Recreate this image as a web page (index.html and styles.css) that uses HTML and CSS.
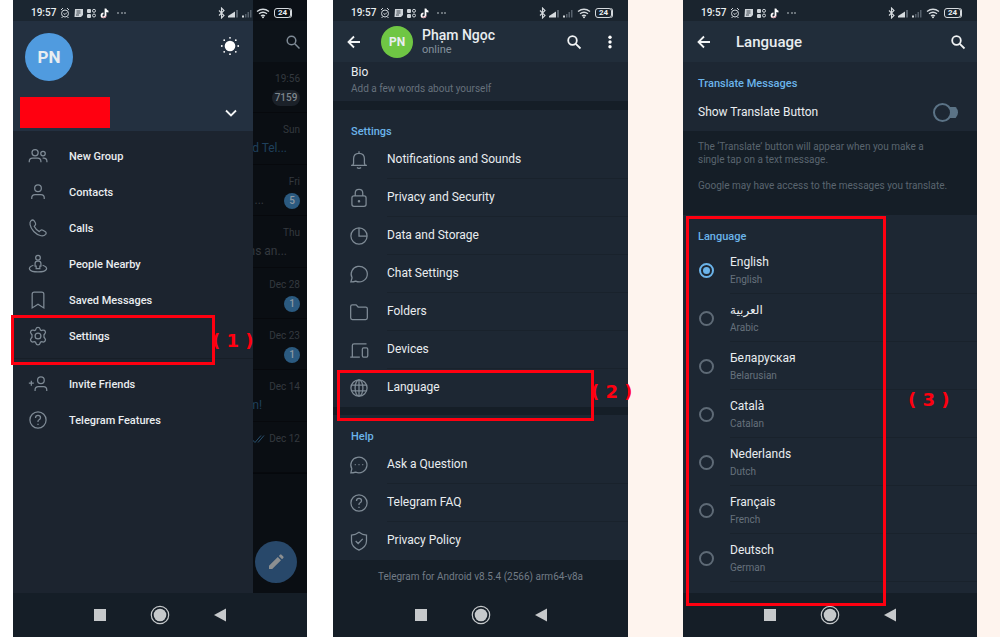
FILE: index.html
```html
<!DOCTYPE html>
<html lang="en">
<head>
  <meta charset="UTF-8" />
  <meta name="viewport" content="width=device-width, initial-scale=1.0"/>
  <title>Telegram - Change language</title>
  <link rel="stylesheet" href="styles.css">
</head>
<body>
  <svg class="sprite" aria-hidden="true">
    <!-- status bar -->
    <symbol id="st-left" viewBox="0 0 66 12">
      <g fill="none" stroke="#cfd5da" stroke-width="1">
        <circle cx="5" cy="6.500" r="3.500"/>
        <path d="M1 3l2-2M9 3L7 1M3.500 6.500l1.500 1 2-2M2.500 10l-1 1M7.500 10l1 1"/>
      </g>
      <path fill="#cfd5da" d="M15 2h8v6l-2 2h-6.500z"/>
      <path d="M16.500 4h4M16.500 6h4M16 8h3" stroke="#1c2631" stroke-width=".8"/>
      <g fill="#cfd5da">
        <rect x="27" y="2" width="4" height="4" rx="1"/>
        <rect x="27" y="7" width="4" height="4" rx="1"/>
      </g>
      <g fill="none" stroke="#cfd5da">
        <circle cx="34" cy="3.800" r="1.500"/>
        <circle cx="34" cy="8.500" r="1.500"/>
      </g>
      <path d="M45.500 1.500v6.800a2 2 0 1 1-2-2M45.500 2c.4 1.800 1.600 2.500 3 2.600" fill="none" stroke="#fff" stroke-width="1.800"/>
      <path d="M42 9.800c1.500 1.400 4.200.8 4.400-1.300" fill="none" stroke="#c4566c" stroke-width=".7"/>
      <g fill="#cfd5da">
        <circle cx="58" cy="6" r=".8"/><circle cx="62" cy="6" r=".8"/><circle cx="65" cy="6" r=".8"/>
      </g>
    </symbol>
    <symbol id="st-right" viewBox="0 0 54 12">
      <path d="M1 3.500l5 5L3.500 11V1L6 3.500l-5 5" fill="none" stroke="#d5dade" stroke-width="1.100"/>
      <g fill="#d5dade">
        <path d="M10 10.500v-1.500l7-4.500v6z"/>
        <rect x="24" y="8.500" width="2" height="2"/>
      </g>
      <g fill="#56616c">
        <rect x="18" y="3" width="2" height="7.500"/>
        <rect x="27" y="7" width="1.500" height="3.500"/><rect x="29.500" y="5" width="1.500" height="5.500"/><rect x="32" y="3" width="1.500" height="7.500"/>
      </g>
      <path d="M39 4.500q6-4.500 12 0M41 6.800q4-3 8 0M43 9q2-1.500 4 0" fill="none" stroke="#d5dade" stroke-width="1.400"/>
      <circle cx="45" cy="10.300" r="1" fill="#d5dade"/>
    </symbol>
    <symbol id="sun" viewBox="0 0 20 20">
      <circle cx="10" cy="10" r="5.300" fill="#fff"/>
      <g fill="#fff">
        <circle cx="10" cy="1.800" r=".9"/><circle cx="10" cy="18.200" r=".9"/><circle cx="1.800" cy="10" r=".9"/><circle cx="18.200" cy="10" r=".9"/>
        <circle cx="4.200" cy="4.200" r=".9"/><circle cx="15.800" cy="4.200" r=".9"/><circle cx="4.200" cy="15.800" r=".9"/><circle cx="15.800" cy="15.800" r=".9"/>
      </g>
    </symbol>
    <symbol id="chevron" viewBox="0 0 12 12"><path d="M1 3.500l5 5 5-5"/></symbol>
    <symbol id="search" viewBox="0 0 16 16"><circle cx="6.500" cy="6.500" r="4.300"/><path d="M9.800 9.800l4.700 4.700"/></symbol>
    <symbol id="back" viewBox="0 0 14 14"><path d="M13 7H2M7 1.500L1.500 7 7 12.500"/></symbol>
    <symbol id="more" viewBox="0 0 14 14">
      <circle cx="7" cy="2.200" r="1.700"/><circle cx="7" cy="7" r="1.700"/><circle cx="7" cy="11.800" r="1.700"/>
    </symbol>
    <symbol id="pencil" viewBox="0 0 18 18">
      <path d="M2 16v-3.200L10.800 4 14 7.200 5.200 16zM11.800 3l1.300-1.300q.7-.7 1.400 0l1.800 1.800q.7.700 0 1.400L15 6.200z"/>
    </symbol>
    <symbol id="ticks" viewBox="0 0 14 10"><path d="M1 5.500l3 3L10 1.500M7 8.500l6-7"/></symbol>

    <!-- drawer -->
    <symbol id="group" viewBox="0 0 24 24">
      <circle cx="8.500" cy="8" r="3.700"/><path d="M1.500 19.500v-1q0-4 4-4h6q4 0 4 4v1"/>
      <circle cx="18" cy="9" r="2.700"/><path d="M17.500 14.500h1.500q3.700 0 3.700 4v1"/>
    </symbol>
    <symbol id="person" viewBox="0 0 24 24">
      <circle cx="12" cy="7.500" r="4"/><path d="M4.500 20.500v-1.500q0-4 4-4h7q4 0 4 4v1.500"/>
    </symbol>
    <symbol id="phone" viewBox="0 0 24 24">
      <path d="M3.500 3.500q2-2 3.700-.3l1.600 2.500q1 1.700-.3 3.100L7.400 10q1.800 4 6.200 6.300l1.200-1.200q1.400-1.300 3.100-.3l3 1.800q1.600 1.200.2 3-2 2.400-5.500 1.700C9 20 3.500 13.500 2.500 8q-.5-3 1-4.500z"/>
    </symbol>
    <symbol id="nearby" viewBox="0 0 24 24">
      <circle cx="12" cy="4.500" r="2.800"/>
      <path d="M9.800 17.500v-3H8.500v-3q0-3 3-3h1q3 0 3 3v3h-1.300v3zM6.500 13.500C-1.500 16 .5 21.500 12 21.500s13.500-5.500 5.500-8"/>
    </symbol>
    <symbol id="bookmark" viewBox="0 0 24 24"><path d="M5 21.500V5q0-2.500 2.500-2.500h9Q19 2.500 19 5v16.500L12 17z"/></symbol>
    <symbol id="gear" viewBox="0 0 24 24">
      <path d="M9.500 3.500q.5-2 2.500-2t2.500 2l.4 1.300 1.200.6 1.500-.4q2-.5 3 1.200t-.4 3.100l-1 1.200v3l1 1.200q1.400 1.500.4 3.200t-3 1.200l-1.500-.4-1.200.7-.4 1.300q-.5 2-2.500 2t-2.500-2l-.4-1.300-1.200-.7-1.500.4q-2 .5-3-1.200t.4-3.200l1-1.200v-3l-1-1.200Q2.400 7.900 3.400 6.200t3-1.200l1.500.4 1.200-.6z"/>
      <circle cx="12" cy="12" r="3.500"/>
    </symbol>
    <symbol id="invite" viewBox="0 0 24 24">
      <path d="M1 11h6M4 8v6"/><circle cx="15.500" cy="7.500" r="4"/><path d="M8.500 20.500v-1.500q0-4 4-4h6q4 0 4 4v1.500"/>
    </symbol>
    <symbol id="help" viewBox="0 0 24 24">
      <circle cx="12" cy="12" r="9.700"/><path d="M9 9.500q0-3 3-3t3 2.700q0 1.500-1.700 2.500T12 14v.5M12 16.500v1.500"/>
    </symbol>

    <!-- settings -->
    <symbol id="bell" viewBox="0 0 24 24">
      <path d="M2.500 18.500h19M4.500 18.500L5.500 16v-5.500q0-6.500 6.500-6.500t6.500 6.500V16l1 2.500M12 4V1.500M9.500 21q2.500 2 5 0"/>
    </symbol>
    <symbol id="lock" viewBox="0 0 24 24">
      <rect x="3.500" y="9.500" width="17" height="12.500" rx="2.500"/><path d="M7.500 9.500V6q0-4.500 4.500-4.500T16.500 6v3.500"/><circle cx="12" cy="15.800" r=".8"/>
    </symbol>
    <symbol id="pie" viewBox="0 0 24 24"><circle cx="12" cy="12" r="9.700"/><path d="M12 2.300V12h9.700"/></symbol>
    <symbol id="chat" viewBox="0 0 24 24"><path d="M2.200 21.500l1.500-5A9.700 9.300 0 1 1 8 20.500q-3 1.200-5.800 1z"/></symbol>
    <symbol id="folder" viewBox="0 0 24 24"><path d="M2 5.500Q2 3.500 4 3.500h4.500L11 6h9q2 0 2 2v11q0 2-2 2H4q-2 0-2-2z"/></symbol>
    <symbol id="devices" viewBox="0 0 24 24">
      <path d="M1.500 20.500H13M4 20.500V6.500q0-2 2-2h15"/><rect x="16" y="9.500" width="6.500" height="11" rx="1.500"/>
    </symbol>
    <symbol id="globe" viewBox="0 0 24 24">
      <circle cx="12" cy="12" r="9.700"/><ellipse cx="12" cy="12" rx="4.700" ry="9.700"/><path d="M12 2.300v19.400M3.500 8.500h17M3.500 15.500h17"/>
    </symbol>
    <symbol id="ask" viewBox="0 0 24 24">
      <path d="M2.200 21.500l1.200-5A9.700 9.300 0 1 1 8 20.500q-3 1-5.800 1zM7.500 11.500v.1M12 11.500v.1M16.500 11.500v.1" stroke-linecap="round"/>
    </symbol>
    <symbol id="shield" viewBox="0 0 24 24">
      <path d="M12 1.500Q16 4.500 21 5v7q0 7-9 11-9-4-9-11V5q5-.5 9-3.500zM8 12l3 3 5.500-5.500"/>
    </symbol>

    <!-- android navigation -->
    <symbol id="nav-recent" viewBox="0 0 20 20"><rect x="4" y="4" width="12" height="12" fill="#c6c9cb"/></symbol>
    <symbol id="nav-home" viewBox="0 0 20 20">
      <circle cx="10" cy="10" r="8.700" fill="none" stroke="#c6c9cb" stroke-width="1.200"/><circle cx="10" cy="10" r="6.300" fill="#c6c9cb"/>
    </symbol>
    <symbol id="nav-back" viewBox="0 0 20 20"><path d="M4 10l12-6.500v13z" fill="#c6c9cb"/></symbol>
  </svg>

  <main class="guide">
    <!-- Step 1: side menu -->
    <section class="phone phone-1">
      <div class="status status-dim">
        <span class="clock">19:57</span>
        <svg class="st-left"><use href="#st-left"/></svg>
        <svg class="st-right"><use href="#st-right"/></svg>
        <span class="battery">24</span>
      </div>
      <div class="home">
        <nav class="drawer">
          <header class="drawer-head">
            <div class="drawer-top">
              <span class="avatar avatar-blue">PN</span>
              <button class="icon-btn" aria-label="Night mode"><svg class="i20"><use href="#sun"/></svg></button>
            </div>
            <div class="drawer-user">
              <span class="name-cover"></span>
              <button class="icon-btn" aria-label="Accounts"><svg class="i12 line white"><use href="#chevron"/></svg></button>
            </div>
          </header>
          <div class="menu">
            <a href="#"><svg class="i20 line"><use href="#group"/></svg>New Group</a>
            <a href="#"><svg class="i20 line"><use href="#person"/></svg>Contacts</a>
            <a href="#"><svg class="i20 line"><use href="#phone"/></svg>Calls</a>
            <a href="#"><svg class="i20 line"><use href="#nearby"/></svg>People Nearby</a>
            <a href="#"><svg class="i20 line"><use href="#bookmark"/></svg>Saved Messages</a>
            <a href="#"><svg class="i20 line"><use href="#gear"/></svg>Settings</a>
          </div>
          <div class="menu menu-more">
            <a href="#"><svg class="i20 line"><use href="#invite"/></svg>Invite Friends</a>
            <a href="#"><svg class="i20 line"><use href="#help"/></svg>Telegram Features</a>
          </div>
        </nav>
        <div class="chats">
          <div class="chats-bar"><button class="icon-btn" aria-label="Search"><svg class="i16 line"><use href="#search"/></svg></button></div>
          <div class="chat-list">
            <div class="chat"><span>19:56</span><b class="count count-wide">7159</b></div>
            <div class="chat"><span>Sun</span><em class="blue">ed Tel...</em></div>
            <div class="chat"><span>Fri</span><div class="chat-line"><em>...</em><b class="count">5</b></div></div>
            <div class="chat"><span>Thu</span><em>ns an...</em></div>
            <div class="chat"><span>Dec 28</span><b class="count">1</b></div>
            <div class="chat"><span>Dec 23</span><b class="count">1</b></div>
            <div class="chat"><span>Dec 14</span><em class="blue short">m!</em></div>
            <div class="chat"><span><svg class="ticks"><use href="#ticks"/></svg>Dec 12</span></div>
          </div>
          <button class="fab" aria-label="New message"><svg class="i18"><use href="#pencil"/></svg></button>
        </div>
      </div>
      <div class="navbar">
        <button aria-label="Recent"><svg class="i20"><use href="#nav-recent"/></svg></button>
        <button aria-label="Home"><svg class="i20"><use href="#nav-home"/></svg></button>
        <button aria-label="Back"><svg class="i20"><use href="#nav-back"/></svg></button>
      </div>
      <div class="mark mark-1"><span>( 1 )</span></div>
    </section>

    <!-- Step 2: settings -->
    <section class="phone phone-2">
      <div class="status">
        <span class="clock">19:57</span>
        <svg class="st-left"><use href="#st-left"/></svg>
        <svg class="st-right"><use href="#st-right"/></svg>
        <span class="battery">24</span>
      </div>
      <header class="appbar">
        <button class="icon-btn" aria-label="Back"><svg class="i14 line white"><use href="#back"/></svg></button>
        <span class="avatar avatar-green">PN</span>
        <div class="who">
          <strong>Phạm Ngọc</strong>
          <small>online</small>
        </div>
        <button class="icon-btn" aria-label="Search"><svg class="i16 line white"><use href="#search"/></svg></button>
        <button class="icon-btn more" aria-label="More"><svg class="i14"><use href="#more"/></svg></button>
      </header>
      <div class="bio">
        <p>Bio</p>
        <small>Add a few words about yourself</small>
      </div>
      <div class="panel">
        <h2>Settings</h2>
        <a class="row" href="#"><svg class="i20 line"><use href="#bell"/></svg><span>Notifications and Sounds</span></a>
        <a class="row" href="#"><svg class="i20 line"><use href="#lock"/></svg><span>Privacy and Security</span></a>
        <a class="row" href="#"><svg class="i20 line"><use href="#pie"/></svg><span>Data and Storage</span></a>
        <a class="row" href="#"><svg class="i20 line"><use href="#chat"/></svg><span>Chat Settings</span></a>
        <a class="row" href="#"><svg class="i20 line"><use href="#folder"/></svg><span>Folders</span></a>
        <a class="row" href="#"><svg class="i20 line"><use href="#devices"/></svg><span>Devices</span></a>
        <a class="row" href="#"><svg class="i20 line"><use href="#globe"/></svg><span>Language</span></a>
      </div>
      <div class="panel">
        <h2>Help</h2>
        <a class="row" href="#"><svg class="i20 line"><use href="#ask"/></svg><span>Ask a Question</span></a>
        <a class="row" href="#"><svg class="i20 line"><use href="#help"/></svg><span>Telegram FAQ</span></a>
        <a class="row" href="#"><svg class="i20 line"><use href="#shield"/></svg><span>Privacy Policy</span></a>
      </div>
      <p class="version">Telegram for Android v8.5.4 (2566) arm64-v8a</p>
      <div class="navbar">
        <button aria-label="Recent"><svg class="i20"><use href="#nav-recent"/></svg></button>
        <button aria-label="Home"><svg class="i20"><use href="#nav-home"/></svg></button>
        <button aria-label="Back"><svg class="i20"><use href="#nav-back"/></svg></button>
      </div>
      <div class="mark mark-2"><span>( 2 )</span></div>
    </section>

    <!-- Step 3: language -->
    <section class="phone phone-3">
      <div class="status">
        <span class="clock">19:57</span>
        <svg class="st-left"><use href="#st-left"/></svg>
        <svg class="st-right"><use href="#st-right"/></svg>
        <span class="battery">24</span>
      </div>
      <header class="appbar">
        <button class="icon-btn" aria-label="Back"><svg class="i14 line white"><use href="#back"/></svg></button>
        <h1>Language</h1>
        <button class="icon-btn" aria-label="Search"><svg class="i16 line white"><use href="#search"/></svg></button>
      </header>
      <div class="panel">
        <h2>Translate Messages</h2>
        <label class="switch-row">Show Translate Button <input type="checkbox" class="switch"></label>
      </div>
      <div class="info">
        <p>The ‘Translate’ button will appear when you make a single tap on a text message.</p>
        <p>Google may have access to the messages you translate.</p>
      </div>
      <div class="panel languages">
        <h2>Language</h2>
        <label class="lang"><input type="radio" name="lang" checked><span>English<small>English</small></span></label>
        <label class="lang"><input type="radio" name="lang"><span>العربية<small>Arabic</small></span></label>
        <label class="lang"><input type="radio" name="lang"><span>Беларуская<small>Belarusian</small></span></label>
        <label class="lang"><input type="radio" name="lang"><span>Català<small>Catalan</small></span></label>
        <label class="lang"><input type="radio" name="lang"><span>Nederlands<small>Dutch</small></span></label>
        <label class="lang"><input type="radio" name="lang"><span>Français<small>French</small></span></label>
        <label class="lang"><input type="radio" name="lang"><span>Deutsch<small>German</small></span></label>
      </div>
      <div class="navbar">
        <button aria-label="Recent"><svg class="i20"><use href="#nav-recent"/></svg></button>
        <button aria-label="Home"><svg class="i20"><use href="#nav-home"/></svg></button>
        <button aria-label="Back"><svg class="i20"><use href="#nav-back"/></svg></button>
      </div>
      <div class="mark mark-3"><span>( 3 )</span></div>
    </section>
  </main>
</body>
</html>
```

FILE: styles.css
```css
* {
  box-sizing: border-box;
}
body {
  margin: 0;
  font-family: Roboto, "DejaVu Sans", sans-serif;
  font-size: 12px;
  color: #e9edf0;
  background: linear-gradient(90deg, #fff 62.8%, #fef4ee 62.8%);
}
h1, h2, p {
  margin: 0;
}
a {
  color: inherit;
  text-decoration: none;
}
button {
  padding: 0;
  border: none;
  background: none;
  color: inherit;
  cursor: pointer;
}
svg {
  display: block;
  flex: none;
}
.sprite {
  display: none;
}
.guide {
  display: grid;
  grid-template-columns: 13fr 294fr 26fr 295fr 55fr 294fr 23fr;
  min-height: 100vh;
}
.phone {
  position: relative;
  display: flex;
  flex-direction: column;
  min-width: 0;
  background: #151e27;
}
.phone-1 { grid-column: 2; }
.phone-2 { grid-column: 4; }
.phone-3 { grid-column: 6; }

/* icons */
.i12 { width: 12px; height: 12px; }
.i14 { width: 14px; height: 14px; }
.i16 { width: 16px; height: 16px; }
.i18 { width: 18px; height: 18px; }
.i20 { width: 20px; height: 20px; }
.line {
  fill: none;
  stroke: #7f8b96;
  stroke-width: 1.5;
}
.white {
  stroke: #f2f4f5;
  stroke-width: 1.8;
}
.icon-btn {
  display: flex;
  align-items: center;
  justify-content: center;
}

/* status bar */
.status {
  display: flex;
  align-items: center;
  height: 21px;
  padding: 4px 16px 0 18px;
  background: #1a242e;
}
.status-dim {
  background: linear-gradient(90deg, #1b2631 81.6%, #0b1016 81.6%);
}
.clock {
  width: 29px;
  font-size: 10px;
  font-weight: 500;
}
.st-left {
  width: 66px;
  height: 12px;
}
.st-right {
  width: 54px;
  height: 12px;
  margin-left: auto;
}
.battery {
  width: 17px;
  height: 10px;
  margin-left: 2px;
  border: 1px solid #d5dade;
  border-radius: 3px;
  box-shadow: 1px 0 #d5dade;
  font-size: 8px;
  line-height: 8px;
  font-weight: 700;
  text-align: center;
}

/* side menu */
.home {
  flex: 1;
  display: grid;
  grid-template-columns: 240fr 54fr;
}
.drawer {
  background: #1c242f;
}
.drawer-head {
  height: 110px;
  padding: 12px 13px 0 12px;
  background: #233040;
}
.drawer-top {
  display: flex;
  justify-content: space-between;
}
.drawer-top .icon-btn {
  align-items: flex-start;
  padding-top: 3px;
}
.avatar {
  display: flex;
  align-items: center;
  justify-content: center;
  flex: none;
  border-radius: 50%;
  font-weight: 700;
}
.avatar-blue {
  width: 48px;
  height: 48px;
  background: #509bdf;
  font-size: 17px;
}
.avatar-green {
  width: 32px;
  height: 32px;
  background: #6fc644;
  font-size: 12px;
}
.drawer-user {
  display: flex;
  align-items: center;
  justify-content: space-between;
  margin-top: 16px;
  padding-right: 3px;
}
.name-cover {
  width: 90px;
  height: 31px;
  margin-left: -5px;
  background: #ff0010;
}
.menu {
  padding-top: 7px;
}
.menu a {
  display: flex;
  align-items: center;
  gap: 21px;
  height: 36px;
  padding-left: 15px;
  font-size: 11px;
  font-weight: 500;
}
.menu-more {
  margin-top: 4px;
  border-top: 1px solid #171e27;
}

/* dimmed chat list behind the menu */
.chats {
  display: flex;
  flex-direction: column;
  min-width: 0;
  overflow: hidden;
  background: #0a0e13;
  color: #34393f;
}
.chats-bar {
  display: flex;
  align-items: center;
  justify-content: flex-end;
  height: 41px;
  padding-right: 6px;
  background: #0d1319;
}
.chat-list {
  display: grid;
  grid-template-columns: minmax(0, 1fr);
  grid-auto-rows: 1fr;
  height: 412px;
  border-bottom: 1px solid #05080c;
}
.chat {
  display: flex;
  flex-direction: column;
  align-items: flex-end;
  gap: 4px;
  padding: 10px 7px 0 0;
  border-bottom: 1px solid #07090d;
  font-size: 10px;
  line-height: 14px;
  white-space: nowrap;
}
.chat span {
  display: flex;
  align-items: center;
  gap: 4px;
}
.chat em {
  padding-right: 13px;
  font-size: 12px;
  font-style: normal;
}
.chat .blue {
  color: #1f405c;
}
.chat .short {
  padding-right: 38px;
}
.chat-line {
  display: flex;
  gap: 7px;
}
.count {
  min-width: 16px;
  height: 16px;
  border-radius: 8px;
  background: #2b5a80;
  color: #8d99a3;
  font-weight: 500;
  line-height: 16px;
  text-align: center;
}
.count-wide {
  width: 28px;
  background: #1b2129;
  color: #7d858c;
}
.ticks {
  width: 14px;
  height: 10px;
  fill: none;
  stroke: #28506e;
}
.fab {
  display: flex;
  align-items: center;
  justify-content: center;
  width: 42px;
  height: 42px;
  margin: auto 10px 10px auto;
  border-radius: 50%;
  background: #28486a;
  fill: #8c8f91;
}

/* settings */
.appbar {
  display: flex;
  align-items: center;
  height: 41px;
  padding: 0 11px 0 14px;
  background: #212d3a;
}
.appbar .avatar {
  margin-left: 20px;
}
.appbar h1 {
  flex: 1;
  margin-left: 25px;
  font-size: 15px;
  font-weight: 500;
}
.who {
  flex: 1;
  display: flex;
  flex-direction: column;
  margin-left: 9px;
}
.who strong {
  font-size: 14px;
  line-height: 16px;
  font-weight: 500;
}
.who small {
  font-size: 11px;
  line-height: 13px;
  color: #84919d;
}
.more {
  margin-left: 21px;
  fill: #fff;
}
.bio {
  height: 39px;
  padding: 2px 18px;
  background: #1d2733;
}
.bio p {
  line-height: 16px;
}
.bio small {
  display: block;
  font-size: 10px;
  line-height: 18px;
  color: #66717c;
}
.panel {
  padding-top: 13px;
  background: #1d2733;
}
.bio + .panel {
  margin-top: 9px;
}
.panel + .panel {
  margin-top: 8px;
}
.panel h2 {
  padding-left: 18px;
  font-size: 11px;
  line-height: 18px;
  font-weight: 500;
  color: #6bb4ea;
}
.phone-3 h2 {
  padding-left: 15px;
}
.row {
  display: flex;
  align-items: center;
  gap: 18px;
  height: 38px;
  padding-left: 16px;
}
.row span {
  flex: 1;
  line-height: 37px;
  border-bottom: 1px solid #19222c;
}
.row:last-child span {
  border-color: transparent;
}
.version {
  flex: 1;
  display: flex;
  align-items: center;
  justify-content: center;
  font-size: 10px;
  color: #727c86;
}

/* language */
.switch-row {
  display: flex;
  align-items: center;
  justify-content: space-between;
  height: 38px;
  padding: 0 19px 0 15px;
}
.switch {
  appearance: none;
  display: flex;
  align-items: center;
  width: 25px;
  height: 15px;
  margin: 0;
  border-radius: 8px;
  background: linear-gradient(#5b7386, #5b7386) right / 20px 11px no-repeat;
}
.switch::before {
  content: "";
  width: 15px;
  height: 15px;
  border: 2px solid #5b7386;
  border-radius: 50%;
  background: #1d2733;
}
.info {
  display: grid;
  gap: 13px;
  padding: 9px 28px 23px 15px;
  font-size: 10px;
  line-height: 13px;
  color: #5a656f;
}
.languages {
  flex: 1;
}
.lang {
  display: flex;
  align-items: center;
  gap: 16px;
  height: 48px;
  padding-left: 16px;
}
.lang input {
  appearance: none;
  width: 15px;
  height: 15px;
  margin: 0;
  border: 2px solid #5e6a76;
  border-radius: 50%;
}
.lang input:checked {
  border-color: #6bb4ea;
  background: #6bb4ea content-box;
  padding: 2px;
}
.lang span {
  flex: 1;
  height: 48px;
  padding-top: 7px;
  border-bottom: 1px solid #19222c;
  line-height: 18px;
}
.lang small {
  display: block;
  font-size: 10px;
  line-height: 18px;
  color: #66717c;
}

.navbar {
  display: flex;
  justify-content: center;
  height: 44px;
  background: #151e27;
}
.navbar button {
  display: flex;
  align-items: center;
  justify-content: center;
  width: 60px;
}

/* red step frames drawn over the screens */
.mark {
  position: absolute;
  z-index: 1;
  border: 3px solid #ff0010;
  color: #ff0010;
  font: bold 18px "DejaVu Sans", sans-serif;
  white-space: nowrap;
  pointer-events: none;
}
.mark span {
  position: absolute;
  left: 100%;
  top: 50%;
  transform: translateY(-50%);
}
.mark-1 {
  left: -2px;
  top: 315px;
  width: 204px;
  height: 50px;
}
.mark-2 {
  left: 4px;
  top: 370px;
  width: 257px;
  height: 51px;
}
.mark-2 span {
  top: 40%;
}
.mark-3 {
  left: 3px;
  top: 216px;
  width: 200px;
  height: 390px;
}
.mark-3 span {
  top: 47%;
  padding-left: 25px;
}
```
